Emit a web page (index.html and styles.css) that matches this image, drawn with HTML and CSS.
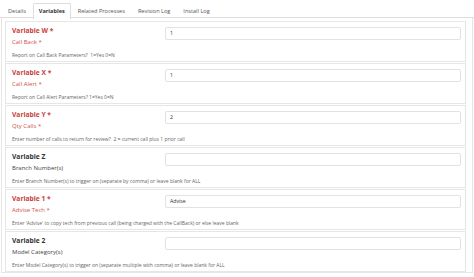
FILE: index.html
```html
<!DOCTYPE html>
<html>
<head>
<meta charset="utf-8">
<link rel="stylesheet" href="styles.css">
</head>
<body>
<div class="tabs">
  <div class="tab">Details</div>
  <div class="tab active">Variables</div>
  <div class="tab">Related Processes</div>
  <div class="tab">Revision Log</div>
  <div class="tab">Install Log</div>
</div>
<div class="panel">
  <div class="row">
    <div class="labels">
      <div class="label req">Variable W *</div>
      <div class="sub req">Call Back *</div>
    </div>
    <div class="input">1</div>
    <div class="desc">Report on Call Back Parameters?&nbsp; 1=Yes 0=N</div>
  </div>
  <div class="row">
    <div class="labels">
      <div class="label req">Variable X *</div>
      <div class="sub req">Call Alert *</div>
    </div>
    <div class="input">1</div>
    <div class="desc">Report on Call Alert Parameters? 1=Yes 0=N</div>
  </div>
  <div class="row">
    <div class="labels">
      <div class="label req">Variable Y *</div>
      <div class="sub req">Qty Calls *</div>
    </div>
    <div class="input">2</div>
    <div class="desc">Enter number of calls to return for review?&nbsp; 2 = current call plus 1 prior call</div>
  </div>
  <div class="row">
    <div class="labels">
      <div class="label">Variable Z</div>
      <div class="sub">Branch Number(s)</div>
    </div>
    <div class="input"></div>
    <div class="desc">Enter Branch Number(s) to trigger on (separate by comma) or leave blank for ALL</div>
  </div>
  <div class="row">
    <div class="labels">
      <div class="label req">Variable 1 *</div>
      <div class="sub req">Advise Tech *</div>
    </div>
    <div class="input">Advise</div>
    <div class="desc">Enter 'Advise' to copy tech from previous call (being charged with the CallBack) or else leave blank</div>
  </div>
  <div class="row">
    <div class="labels">
      <div class="label">Variable 2</div>
      <div class="sub">Model Category(s)</div>
    </div>
    <div class="input"></div>
    <div class="desc">Enter Model Category(s) to trigger on (separate multiple with comma) or leave blank for ALL</div>
  </div>
</div>
</body>
</html>
```
FILE: styles.css
```css
html, body {
  margin: 0;
  padding: 0;
  background: #fff;
  font-family: "Open Sans", "Liberation Sans", sans-serif;
  color: #333;
  overflow: hidden;
}
.tabs {
  display: flex;
  padding: 3px 0 0 2px;
  height: 14px;
  border-bottom: 1px solid #dedede;
}
.tab {
  padding: 0 5px;
  margin-right: 1px;
  font-size: 5.6px;
  line-height: 14px;
  color: #555;
  border: 1px solid transparent;
  border-bottom: none;
  border-radius: 2px 2px 0 0;
}
.tab.active {
  font-weight: 700;
  color: #333;
  background: #fff;
  border-color: #dedede;
  height: 15px;
  margin-bottom: -1px;
}
.panel {
  margin: 0 1px;
  border: 1px solid #e6e6e6;
  border-top: none;
  padding: 3px 6px 0 3px;
  display: flex;
  flex-direction: column;
  gap: 1px;
}
.row {
  box-sizing: border-box;
  border: 1px solid #e6e6e6;
  height: 41px;
  flex: none;
  padding: 4px 4px 0 6px;
  display: grid;
  grid-template-columns: 153px 1fr;
  grid-template-rows: 23px 1fr;
}
.labels {
  display: flex;
  flex-direction: column;
}
.label {
  font-size: 6.7px;
  font-weight: 700;
  line-height: 10px;
  color: #333;
}
.sub {
  font-size: 6px;
  line-height: 12px;
  color: #444;
}
.label.req {
  color: #c8423c;
}
.sub.req {
  color: #d0524a;
}
.input {
  margin-top: 1px;
  height: 11px;
  border: 1px solid #e2e2e2;
  border-radius: 2px;
  font-size: 5.2px;
  line-height: 11px;
  padding: 0 4px;
  color: #333;
}
.desc {
  grid-column: 1 / 3;
  align-self: end;
  margin-bottom: 2px;
  font-size: 5px;
  line-height: 8px;
  color: #666;
}
```
